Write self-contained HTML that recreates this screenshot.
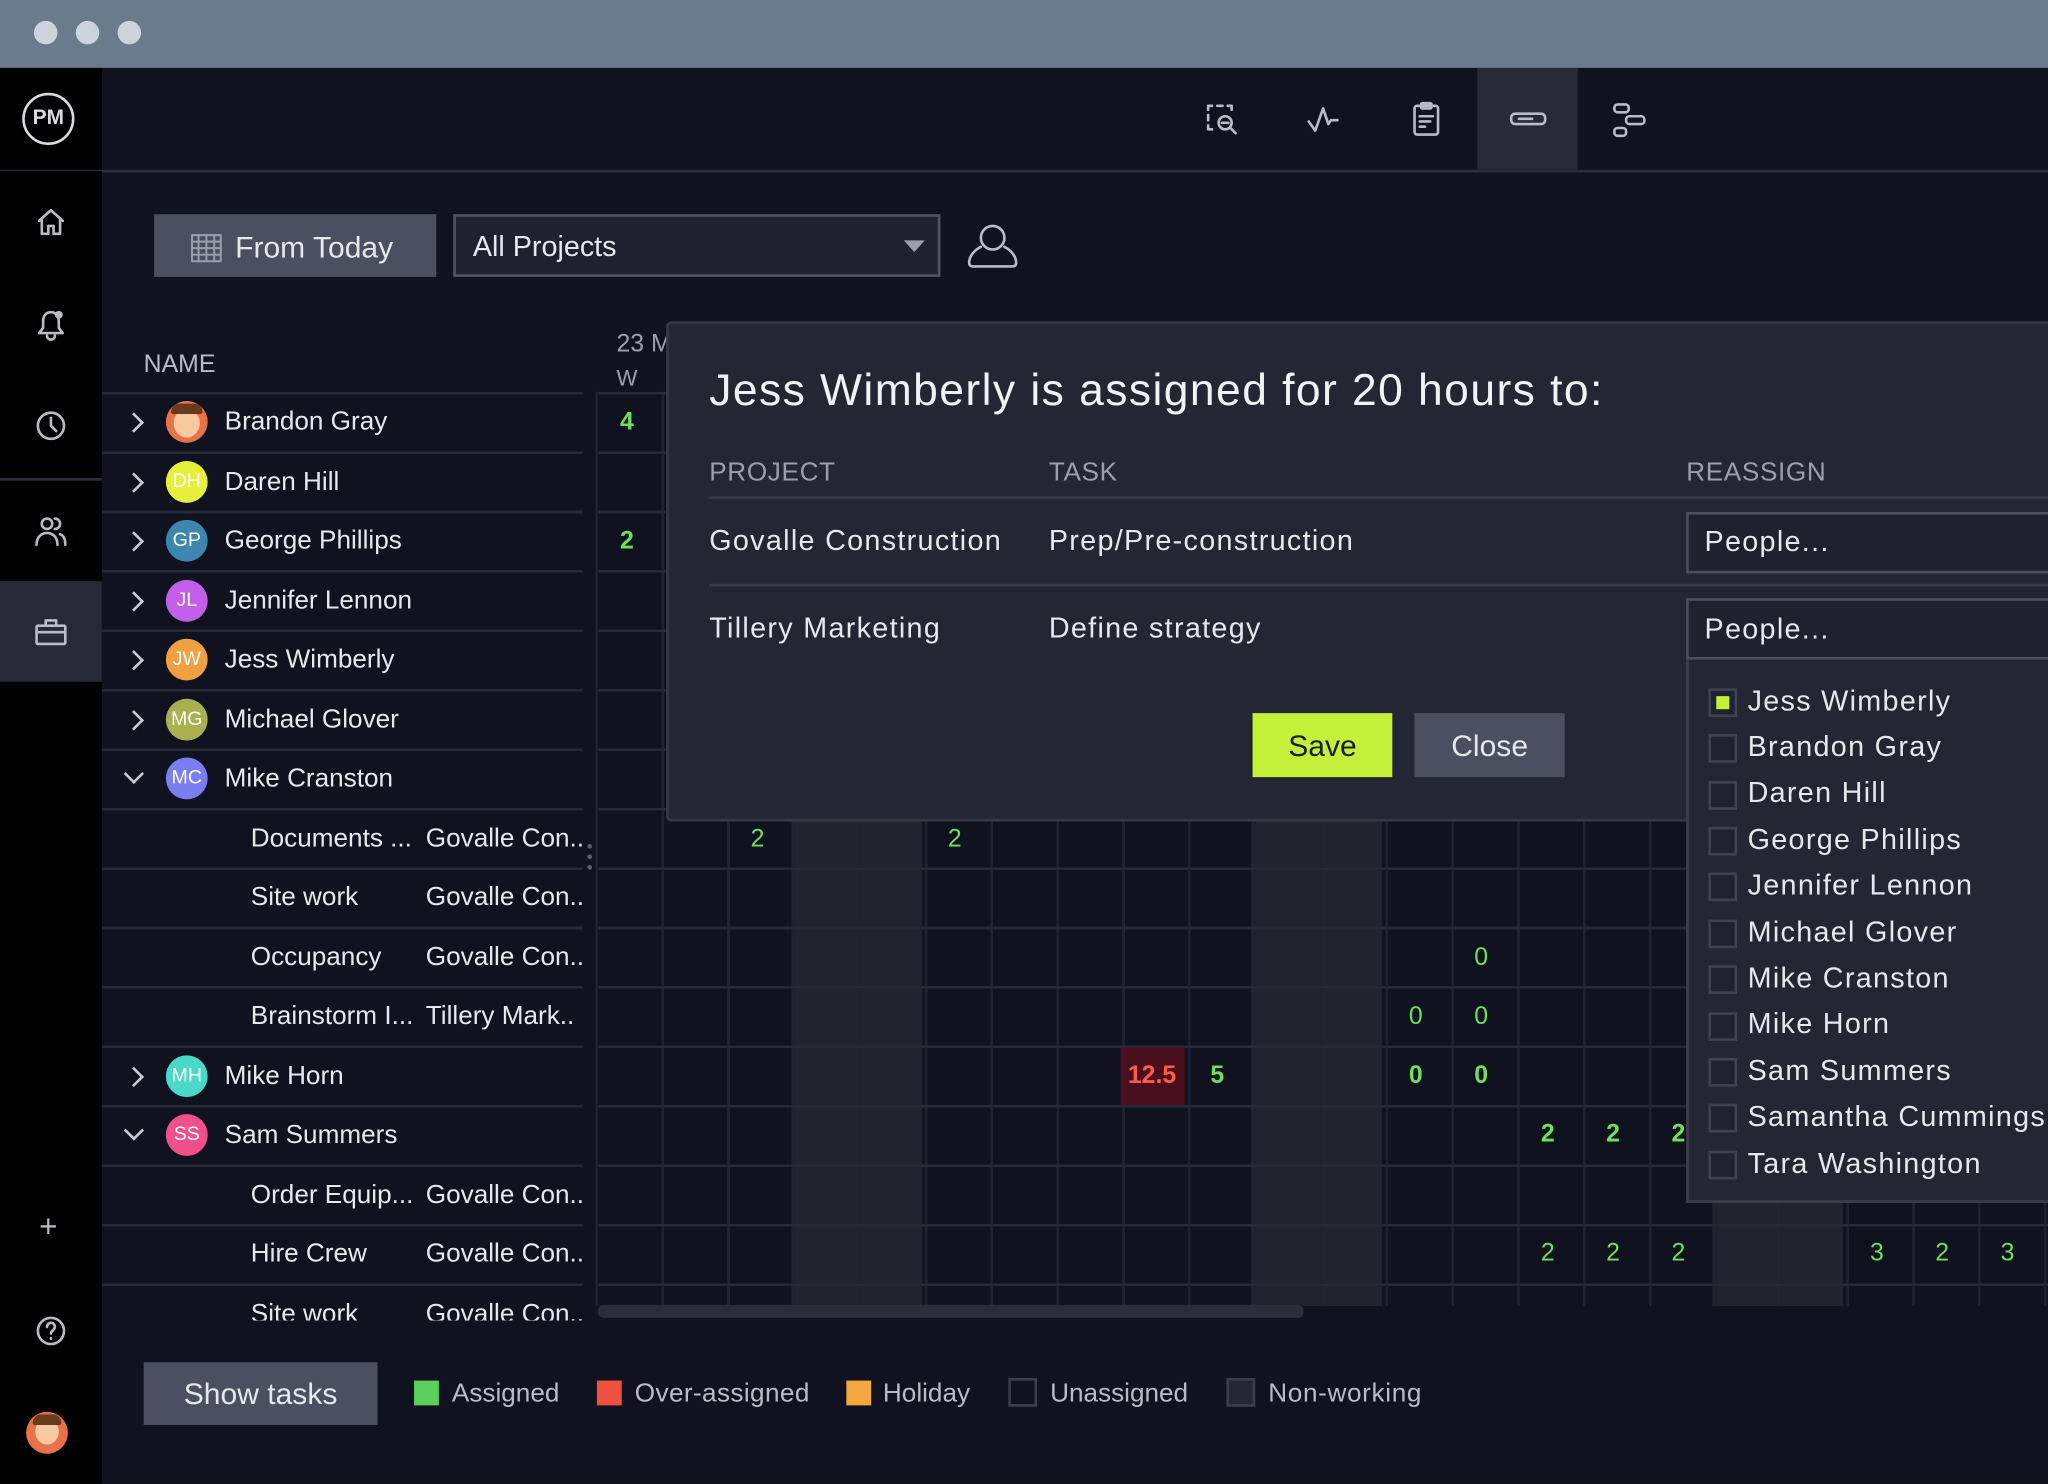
<!DOCTYPE html>
<html><head><meta charset="utf-8"><style>
*{margin:0;padding:0;box-sizing:border-box}
body{width:2048px;height:1484px;overflow:hidden;background:#10131f;font-family:"Liberation Sans",sans-serif;}
#w{position:absolute;left:0;top:0;width:1568px;height:1136px;transform:scale(1.30612);transform-origin:0 0;background:#10131f;overflow:hidden;color:#e6e8ec}
.a{position:absolute}
.t{position:absolute;white-space:nowrap;font-size:20px;line-height:24px}
.m{letter-spacing:1px}
.av{position:absolute;width:32px;height:32px;border-radius:50%;font-size:15px;line-height:32px;text-align:center;color:#fff;left:127px}
.chev{position:absolute;left:97px;width:11px;height:11px;border-right:2px solid #c8ccd4;border-bottom:2px solid #c8ccd4;transform:rotate(-45deg)}
.chev.d{transform:rotate(45deg)}
.g{position:absolute;font-size:19px;color:#6ee05a;width:50px;text-align:center}
.cb{position:absolute;left:1308px;width:22px;height:22px;border:2px solid #3e4352;background:#1f2330}
.it{position:absolute;left:1338px;font-size:22px;white-space:nowrap;letter-spacing:1px}
svg{position:absolute;fill:none;stroke:#b8bcc6;stroke-width:2;stroke-linecap:round;stroke-linejoin:round}
</style></head><body><div id="w">
<div class="a" style="left:0;top:0;width:1568px;height:52px;background:#6b7b8c"></div>
<div class="a" style="left:26px;top:16px;width:18px;height:18px;border-radius:50%;background:#cdd3da"></div>
<div class="a" style="left:58px;top:16px;width:18px;height:18px;border-radius:50%;background:#cdd3da"></div>
<div class="a" style="left:90px;top:16px;width:18px;height:18px;border-radius:50%;background:#cdd3da"></div>
<div class="a" style="left:0;top:52px;width:78px;height:1084px;background:#000"></div>
<div class="a" style="left:0;top:130px;width:78px;height:1px;background:#2a2f3d"></div>
<div class="a" style="left:0;top:366px;width:78px;height:2px;background:#2a2f3d"></div>
<div class="a" style="left:0;top:445px;width:78px;height:77px;background:#262a36"></div>
<div class="a" style="left:17px;top:71px;width:40px;height:40px;border:2.5px solid #d8dce2;border-radius:50%;font-size:16px;font-weight:bold;line-height:35px;text-align:center;color:#d8dce2">PM</div>
<svg style="left:27px;top:158px" width="24" height="24" viewBox="0 0 24 24"><path d="M3 11L12 3l9 8M5 9v12h5v-6h4v6h5V9"/></svg>
<svg style="left:27px;top:236px" width="24" height="26" viewBox="0 0 24 26"><path d="M12 3c-4 0-6 3-6 7v5l-3 4h18l-3-4v-5c0-4-2-7-6-7zM9 21c0 2 1.5 3 3 3s3-1 3-3"/><circle cx="18" cy="5" r="2" fill="#b8bcc6"/></svg>
<svg style="left:27px;top:314px" width="24" height="24" viewBox="0 0 24 24"><circle cx="12" cy="12" r="10"/><path d="M12 6v6l4 4"/></svg>
<svg style="left:26px;top:393px" width="26" height="26" viewBox="0 0 26 26"><circle cx="10" cy="8" r="4"/><path d="M2 24c0-6 4-9 8-9s8 3 8 9M16 4a4 4 0 010 8M20 16c3 1 4 4 4 8"/></svg>
<svg style="left:26px;top:472px" width="26" height="24" viewBox="0 0 26 24"><rect x="2" y="7" width="22" height="14" rx="1"/><path d="M9 7V3h8v4M2 12h22"/></svg>
<div class="t" style="left:30px;top:928px;font-size:24px;color:#b8bcc6">+</div>
<svg style="left:27px;top:1007px" width="24" height="24" viewBox="0 0 24 24"><circle cx="12" cy="12" r="10"/><path d="M9 9a3 3 0 115 2c-1 1-2 1.5-2 3M12 17.5v.5"/></svg>
<div class="a" style="left:20px;top:1081px;width:32px;height:32px;border-radius:50%;background:#e8734a"></div>
<div class="a" style="left:27px;top:1086px;width:18px;height:20px;border-radius:50%;background:#f6c9a0"></div>
<div class="a" style="left:25px;top:1083px;width:22px;height:8px;border-radius:8px 8px 2px 2px;background:#6a3a1e"></div>
<div class="a" style="left:78px;top:130px;width:1490px;height:2px;background:#2a2f3d"></div>
<div class="a" style="left:1131px;top:52px;width:77px;height:78px;background:#262a36"></div>
<svg style="left:922px;top:78px" width="28" height="28" viewBox="0 0 28 28"><path d="M3 6V3h3M10 3h4M18 3h3v3M3 10v4M3 18v3h3"/><circle cx="16" cy="16" r="5"/><path d="M13.5 16h5M20 20l4 4"/></svg>
<svg style="left:1000px;top:79px" width="28" height="26" viewBox="0 0 28 26"><path d="M2 14l5 7 6-17 4 12 2-3h5"/></svg>
<svg style="left:1080px;top:77px" width="24" height="28" viewBox="0 0 24 28"><rect x="3" y="4" width="18" height="22" rx="2"/><rect x="8" y="2" width="8" height="4" rx="1"/><path d="M7 12h10M7 16h8M7 20h4"/></svg>
<svg style="left:1155px;top:82px" width="30" height="18" viewBox="0 0 30 18"><rect x="2" y="5" width="26" height="8" rx="3"/><path d="M8 9h10"/></svg>
<svg style="left:1234px;top:77px" width="28" height="30" viewBox="0 0 28 30"><rect x="2" y="3" width="11" height="6" rx="2.5"/><rect x="11" y="12" width="14" height="6" rx="2.5"/><rect x="2" y="21" width="9" height="6" rx="2.5"/></svg>
<div class="a" style="left:118px;top:164px;width:216px;height:48px;background:#4a5060"></div>
<svg style="left:146px;top:177px;stroke:#9aa0ac;stroke-width:1.5" width="24" height="24" viewBox="0 0 24 24"><rect x="1" y="3" width="22" height="20"/><path d="M1 8h22M1 13h22M1 18h22M6 3v20M12 3v20M18 3v20"/></svg>
<div class="t" style="left:180px;top:176px;font-size:23px;line-height:26px">From Today</div>
<div class="a" style="left:347px;top:164px;width:373px;height:48px;background:#1e2230;border:2px solid #4e5463"></div>
<div class="t" style="left:362px;top:176px;font-size:22px;line-height:26px">All Projects</div>
<div class="a" style="left:692px;top:184px;width:0;height:0;border-left:8px solid transparent;border-right:8px solid transparent;border-top:9px solid #9aa0ac"></div>
<svg style="left:740px;top:168px" width="40" height="40" viewBox="0 0 40 40"><circle cx="20" cy="14" r="9"/><path d="M11 21c-6 3-9 8-9 12 0 2 1 3 3 3h30c2 0 3-1 3-3 0-4-3-9-9-12"/></svg>
<div class="t" style="left:110px;top:268px;font-size:19px;color:#b8bcc6">NAME</div>
<div class="t" style="left:472px;top:252px;font-size:19px;color:#9aa0ac">23 M</div>
<div class="t" style="left:472px;top:278px;font-size:17px;color:#9aa0ac">W</div>
<div class="a" style="left:78px;top:300px;width:368px;height:710px;background:repeating-linear-gradient(to bottom,#262a38 0,#262a38 2px,transparent 2px,transparent 45.5px)"></div>
<div class="a" style="left:458px;top:300px;width:1110px;height:700px;background:#10131f"></div>
<div class="a" style="left:606px;top:300px;width:100px;height:700px;background:#20242f"></div>
<div class="a" style="left:958px;top:300px;width:100px;height:700px;background:#20242f"></div>
<div class="a" style="left:1311px;top:300px;width:100px;height:700px;background:#20242f"></div>
<div class="a" style="left:456px;top:300px;width:1112px;height:700px;background:repeating-linear-gradient(to right,#1e2230 0,#1e2230 2px,transparent 2px,transparent 50.4px)"></div>
<div class="a" style="left:458px;top:300px;width:1110px;height:700px;background:repeating-linear-gradient(to bottom,#262a38 0,#262a38 2px,transparent 2px,transparent 45.5px)"></div>
<div class="a" style="left:458px;top:999px;width:540px;height:10px;background:#2a2e3a;border-radius:4px"></div>
<div class="a" style="left:449px;top:644px;width:5px;height:24px;background:radial-gradient(circle,#5a6070 1.5px,transparent 2px) 0 0/5px 8px"></div>
<div class="chev" style="top:318px"></div><div class="av" style="top:307px;background:#e8734a"></div><div class="a" style="left:133px;top:313px;width:20px;height:22px;border-radius:50%;background:#f6c9a0"></div><div class="a" style="left:131px;top:309px;width:24px;height:8px;border-radius:8px 8px 2px 2px;background:#6a3a1e"></div><div class="t" style="left:172px;top:311px">Brandon Gray</div>
<div class="chev" style="top:364px"></div><div class="av" style="top:353px;background:#e6f03a">DH</div><div class="t" style="left:172px;top:357px">Daren Hill</div>
<div class="chev" style="top:409px"></div><div class="av" style="top:398px;background:#3d86b0">GP</div><div class="t" style="left:172px;top:402px">George Phillips</div>
<div class="chev" style="top:455px"></div><div class="av" style="top:444px;background:#c25ee8">JL</div><div class="t" style="left:172px;top:448px">Jennifer Lennon</div>
<div class="chev" style="top:500px"></div><div class="av" style="top:489px;background:#f0a040">JW</div><div class="t" style="left:172px;top:493px">Jess Wimberly</div>
<div class="chev" style="top:546px"></div><div class="av" style="top:535px;background:#a8b050">MG</div><div class="t" style="left:172px;top:539px">Michael Glover</div>
<div class="chev d" style="top:587px"></div><div class="av" style="top:580px;background:#7a7ef0">MC</div><div class="t" style="left:172px;top:584px">Mike Cranston</div>
<div class="t" style="left:192px;top:630px">Documents ...</div><div class="t" style="left:326px;top:630px">Govalle Con..</div>
<div class="t" style="left:192px;top:675px">Site work</div><div class="t" style="left:326px;top:675px">Govalle Con..</div>
<div class="t" style="left:192px;top:721px">Occupancy</div><div class="t" style="left:326px;top:721px">Govalle Con..</div>
<div class="t" style="left:192px;top:766px">Brainstorm I...</div><div class="t" style="left:326px;top:766px">Tillery Mark..</div>
<div class="chev" style="top:819px"></div><div class="av" style="top:808px;background:#4ad8c8">MH</div><div class="t" style="left:172px;top:812px">Mike Horn</div>
<div class="chev d" style="top:860px"></div><div class="av" style="top:853px;background:#f0508a">SS</div><div class="t" style="left:172px;top:857px">Sam Summers</div>
<div class="t" style="left:192px;top:903px">Order Equip...</div><div class="t" style="left:326px;top:903px">Govalle Con..</div>
<div class="t" style="left:192px;top:948px">Hire Crew</div><div class="t" style="left:326px;top:948px">Govalle Con..</div>
<div class="a" style="left:78px;top:990px;width:380px;height:21px;overflow:hidden"><div class="t" style="left:114px;top:4px">Site work</div><div class="t" style="left:248px;top:4px">Govalle Con..</div></div>
<div class="g" style="left:455px;top:313px;font-weight:bold">4</div>
<div class="g" style="left:455px;top:404px;font-weight:bold">2</div>
<div class="g" style="left:555px;top:632px">2</div><div class="g" style="left:706px;top:632px">2</div>
<div class="g" style="left:1109px;top:723px">0</div>
<div class="g" style="left:1059px;top:768px">0</div><div class="g" style="left:1109px;top:768px">0</div>
<div class="a" style="left:858px;top:802px;width:49px;height:44px;background:#4a0f1c"></div>
<div class="g" style="left:857px;top:813px;color:#ff5a4e;font-weight:bold">12.5</div>
<div class="g" style="left:907px;top:813px;font-weight:bold">5</div>
<div class="g" style="left:1059px;top:813px;font-weight:bold">0</div><div class="g" style="left:1109px;top:813px;font-weight:bold">0</div>
<div class="g" style="left:1160px;top:858px;font-weight:bold">2</div><div class="g" style="left:1210px;top:858px;font-weight:bold">2</div><div class="g" style="left:1260px;top:858px;font-weight:bold">2</div>
<div class="g" style="left:1160px;top:949px">2</div><div class="g" style="left:1210px;top:949px">2</div><div class="g" style="left:1260px;top:949px">2</div>
<div class="g" style="left:1412px;top:949px">3</div><div class="g" style="left:1462px;top:949px">2</div><div class="g" style="left:1512px;top:949px">3</div>
<div class="a" style="left:510px;top:246px;width:1070px;height:383px;background:#232733;border:2px solid #343946;border-radius:4px"></div>
<div class="t" style="left:543px;top:279px;font-size:34px;line-height:40px;color:#f0f2f5;letter-spacing:1.1px">Jess Wimberly is assigned for 20 hours to:</div>
<div class="t m" style="left:543px;top:350px;color:#9aa0ab;letter-spacing:0.5px">PROJECT</div>
<div class="t m" style="left:803px;top:350px;color:#9aa0ab;letter-spacing:0.5px">TASK</div>
<div class="t m" style="left:1291px;top:350px;color:#9aa0ab;letter-spacing:0.5px">REASSIGN</div>
<div class="a" style="left:543px;top:380px;width:1030px;height:2px;background:#363b48"></div>
<div class="t m" style="left:543px;top:401px;font-size:22px;line-height:26px">Govalle Construction</div>
<div class="t m" style="left:803px;top:401px;font-size:22px;line-height:26px">Prep/Pre-construction</div>
<div class="a" style="left:1291px;top:392px;width:290px;height:47px;background:#1e222e;border:2px solid #4a5060"></div>
<div class="t m" style="left:1305px;top:402px;font-size:22px;line-height:26px">People...</div>
<div class="a" style="left:543px;top:447px;width:1030px;height:2px;background:#363b48"></div>
<div class="t m" style="left:543px;top:468px;font-size:22px;line-height:26px">Tillery Marketing</div>
<div class="t m" style="left:803px;top:468px;font-size:22px;line-height:26px">Define strategy</div>
<div class="a" style="left:959px;top:546px;width:107px;height:49px;background:#c5f03a"></div>
<div class="t" style="left:959px;top:558px;width:107px;text-align:center;font-size:23px;line-height:26px;color:#1a1d26">Save</div>
<div class="a" style="left:1083px;top:546px;width:115px;height:49px;background:#4a5060"></div>
<div class="t" style="left:1083px;top:558px;width:115px;text-align:center;font-size:23px;line-height:26px">Close</div>
<div class="a" style="left:1291px;top:458px;width:290px;height:463px;background:#232733;border:2px solid #3a3f4c"></div>
<div class="a" style="left:1291px;top:458px;width:290px;height:47px;background:#1e222e;border:2px solid #4a5060"></div>
<div class="t m" style="left:1305px;top:469px;font-size:22px;line-height:26px">People...</div>
<div class="cb" style="top:527px"></div><div class="a" style="left:1314px;top:533px;width:10px;height:10px;background:#c5f03a"></div><div class="it" style="top:524px">Jess Wimberly</div>
<div class="cb" style="top:562px"></div><div class="it" style="top:559px">Brandon Gray</div>
<div class="cb" style="top:598px"></div><div class="it" style="top:594px">Daren Hill</div>
<div class="cb" style="top:633px"></div><div class="it" style="top:630px">George Phillips</div>
<div class="cb" style="top:668px"></div><div class="it" style="top:665px">Jennifer Lennon</div>
<div class="cb" style="top:704px"></div><div class="it" style="top:701px">Michael Glover</div>
<div class="cb" style="top:739px"></div><div class="it" style="top:736px">Mike Cranston</div>
<div class="cb" style="top:775px"></div><div class="it" style="top:771px">Mike Horn</div>
<div class="cb" style="top:810px"></div><div class="it" style="top:807px">Sam Summers</div>
<div class="cb" style="top:845px"></div><div class="it" style="top:842px">Samantha Cummings</div>
<div class="cb" style="top:881px"></div><div class="it" style="top:878px">Tara Washington</div>
<div class="a" style="left:110px;top:1043px;width:179px;height:48px;background:#4a5060"></div>
<div class="t" style="left:110px;top:1054px;width:179px;text-align:center;font-size:23px;line-height:26px">Show tasks</div>
<div class="a" style="left:317px;top:1057px;width:19px;height:19px;background:#5ad05a"></div>
<div class="t" style="left:346px;top:1055px;color:#b8bcc6">Assigned</div>
<div class="a" style="left:457px;top:1057px;width:19px;height:19px;background:#f05040"></div>
<div class="t" style="left:486px;top:1055px;color:#b8bcc6;letter-spacing:0.3px">Over-assigned</div>
<div class="a" style="left:648px;top:1057px;width:19px;height:19px;background:#f5a840"></div>
<div class="t" style="left:676px;top:1055px;color:#b8bcc6">Holiday</div>
<div class="a" style="left:772px;top:1055px;width:22px;height:22px;border:2px solid #3a3f4c"></div>
<div class="t" style="left:804px;top:1055px;color:#b8bcc6">Unassigned</div>
<div class="a" style="left:939px;top:1055px;width:22px;height:22px;border:2px solid #3a3f4c;background:#232733"></div>
<div class="t" style="left:971px;top:1055px;color:#b8bcc6;letter-spacing:0.5px">Non-working</div>
</div></body></html>
